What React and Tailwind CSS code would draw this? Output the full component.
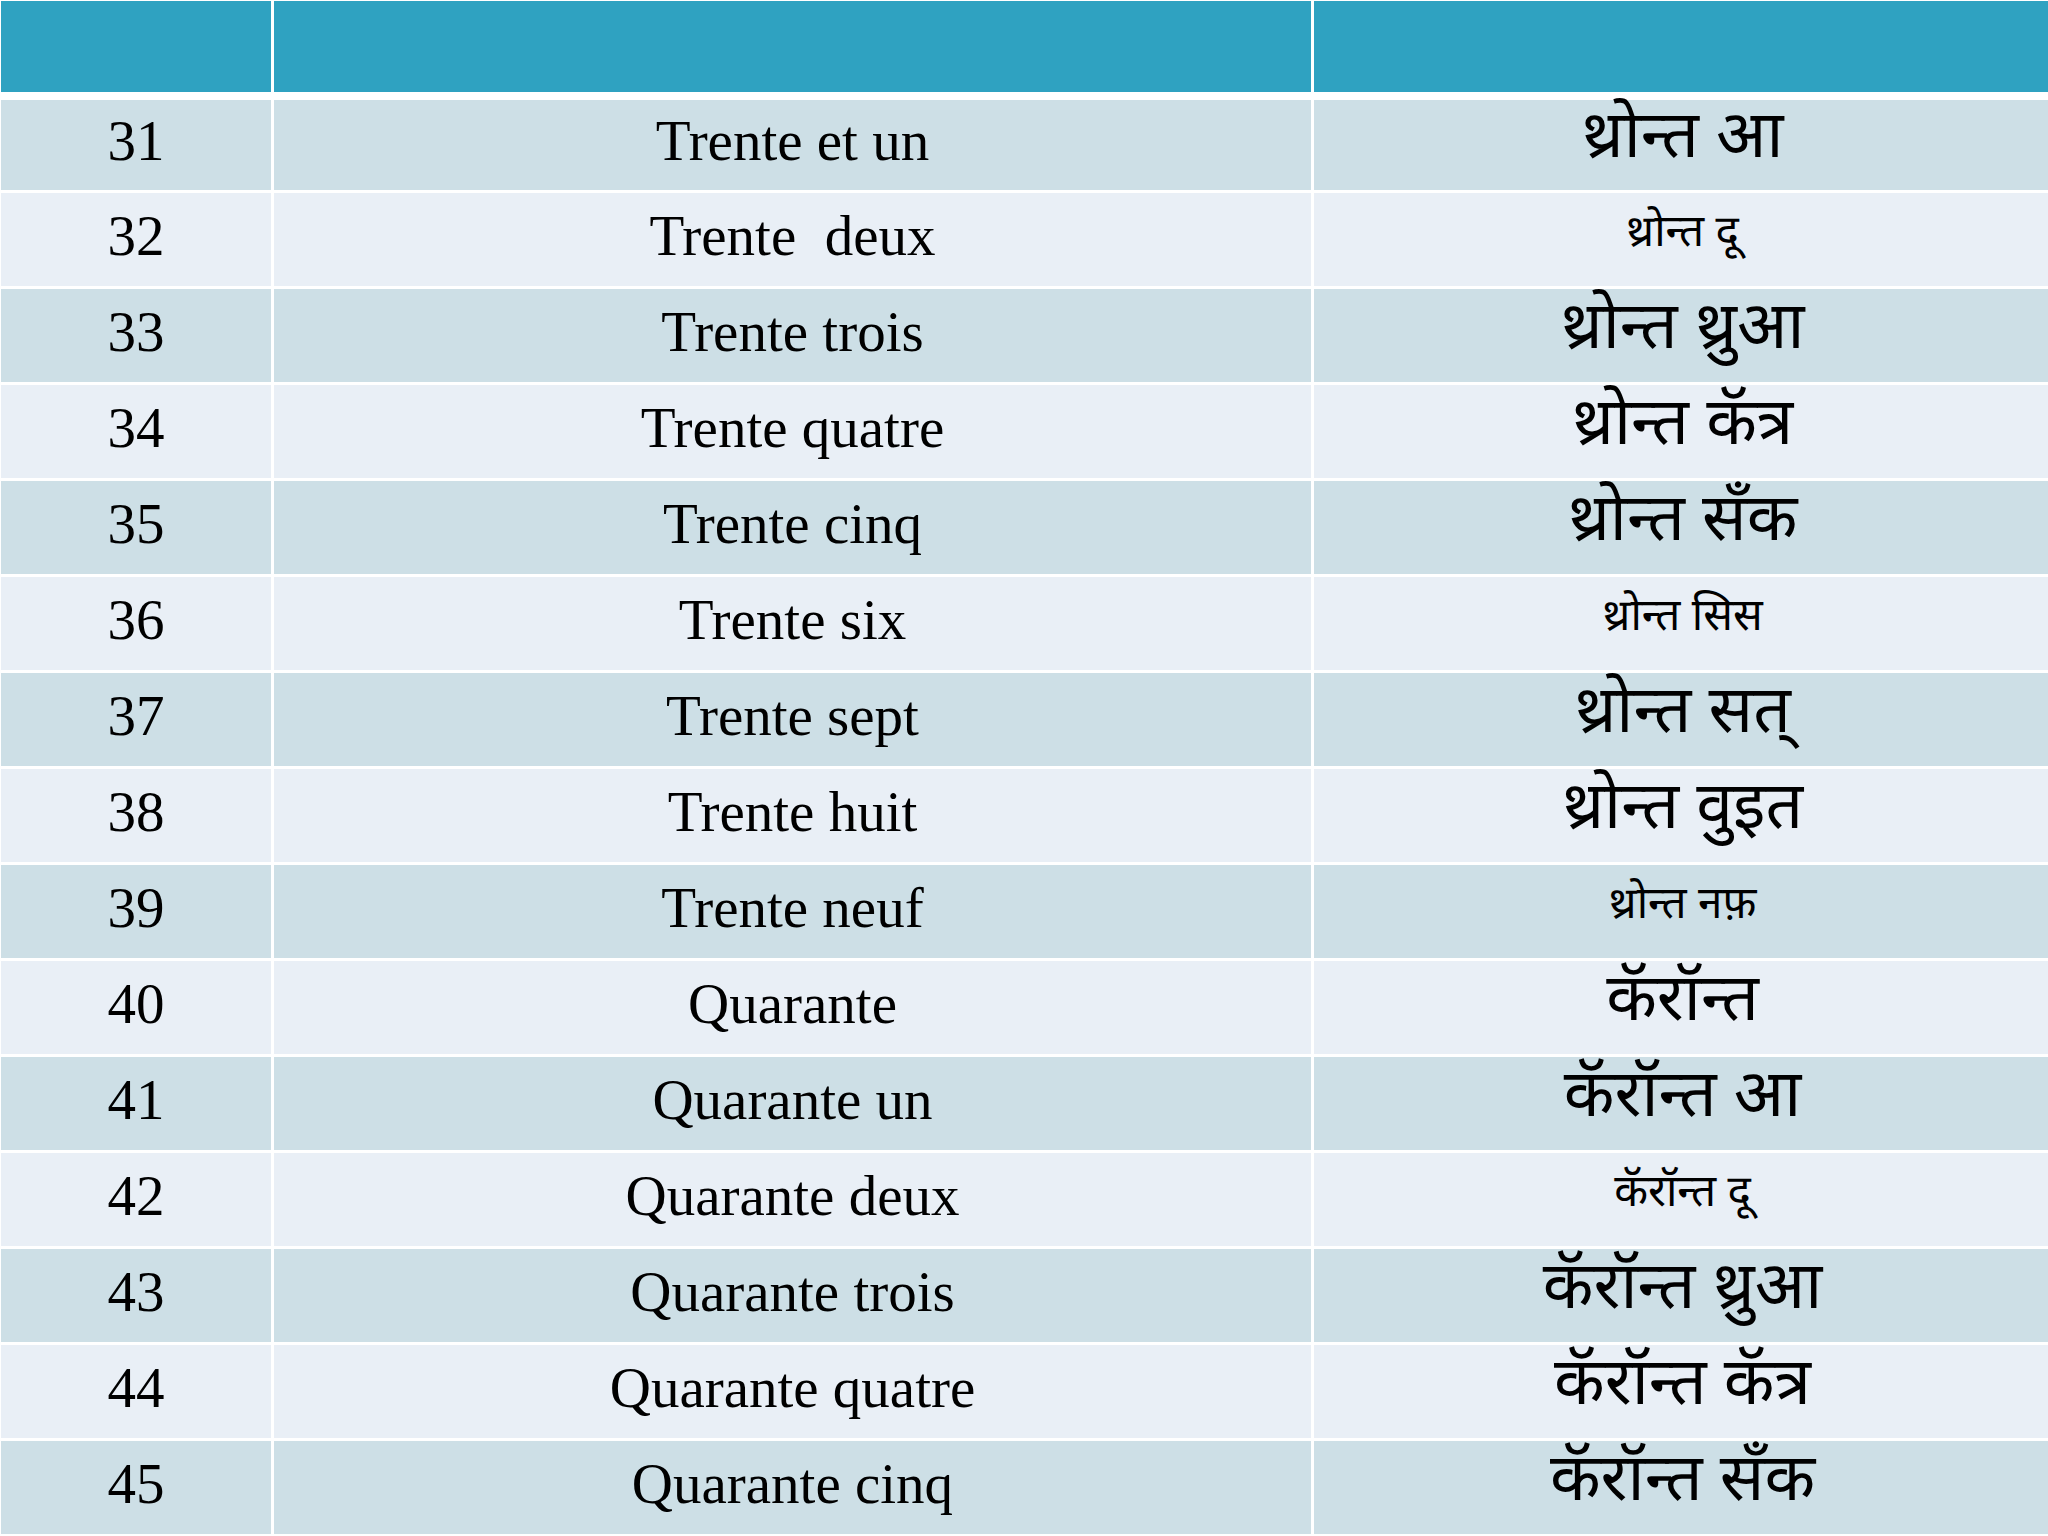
import React from "react";

// rows of the table: number, French, Hindi transliteration, small flag for the smaller Hindi text
const rows = [
	{ n: "31", fr: "Trente et un", hi: "थ्रोन्त आ" },
	{ n: "32", fr: "Trente\u00a0 deux", hi: "थ्रोन्त दू", small: true },
	{ n: "33", fr: "Trente trois", hi: "थ्रोन्त थ्रुआ" },
	{ n: "34", fr: "Trente quatre", hi: "थ्रोन्त कॅत्र" },
	{ n: "35", fr: "Trente cinq", hi: "थ्रोन्त सँक" },
	{ n: "36", fr: "Trente six", hi: "थ्रोन्त सिस", small: true },
	{ n: "37", fr: "Trente sept", hi: "थ्रोन्त सत्" },
	{ n: "38", fr: "Trente huit", hi: "थ्रोन्त वुइत" },
	{ n: "39", fr: "Trente neuf", hi: "थ्रोन्त नफ़", small: true },
	{ n: "40", fr: "Quarante", hi: "कॅरॉन्त" },
	{ n: "41", fr: "Quarante un", hi: "कॅरॉन्त आ" },
	{ n: "42", fr: "Quarante deux", hi: "कॅरॉन्त दू", small: true },
	{ n: "43", fr: "Quarante trois", hi: "कॅरॉन्त थ्रुआ" },
	{ n: "44", fr: "Quarante quatre", hi: "कॅरॉन्त कॅत्र" },
	{ n: "45", fr: "Quarante cinq", hi: "कॅरॉन्त सँक" },
];

const serif = "font-['Liberation_Serif','Times_New_Roman',serif]";
const deva = "font-['Mangal','Noto_Sans_Devanagari','Lohit_Devanagari','Noto_Sans',sans-serif]";

export default function App() {
	return (
		<div className="w-[2048px] h-[1536px] bg-white pt-[1px] pl-[1px] overflow-hidden">
			{/* header band */}
			<div className="grid grid-cols-[270px_1037px_737px] gap-x-[3px] h-[91px]">
				<div className="bg-[#2fa2c1]" />
				<div className="bg-[#2fa2c1]" />
				<div className="bg-[#2fa2c1]" />
			</div>

			<div className="flex flex-col gap-y-[3px] mt-[8px]">
				{rows.map((row, i) => {
					const bg = i % 2 === 0 ? "bg-[#cddfe6]" : "bg-[#e9eff6]";
					return (
						<div
							key={row.n}
							className={`grid grid-cols-[270px_1037px_737px] grid-rows-[100%] gap-x-[3px] shrink-0 ${i === 0 ? "h-[90px]" : "h-[93px]"}`}
						>
							<div className={`${bg} flex items-center justify-center ${serif} text-[57px] leading-[1.15] text-black pb-[8px]`}>
								{row.n}
							</div>
							<div className={`${bg} flex items-center justify-center ${serif} text-[57px] leading-[1.15] text-black whitespace-pre pb-[8px]`}>
								{row.fr}
							</div>
							<div className={`${bg} flex items-center justify-center ${deva} text-black pb-[6px]`}>
								<span className={row.small ? "text-[44px] leading-[1.2]" : "text-[66px] leading-[1.2]"}>{row.hi}</span>
							</div>
						</div>
					);
				})}
			</div>
		</div>
	);
}
